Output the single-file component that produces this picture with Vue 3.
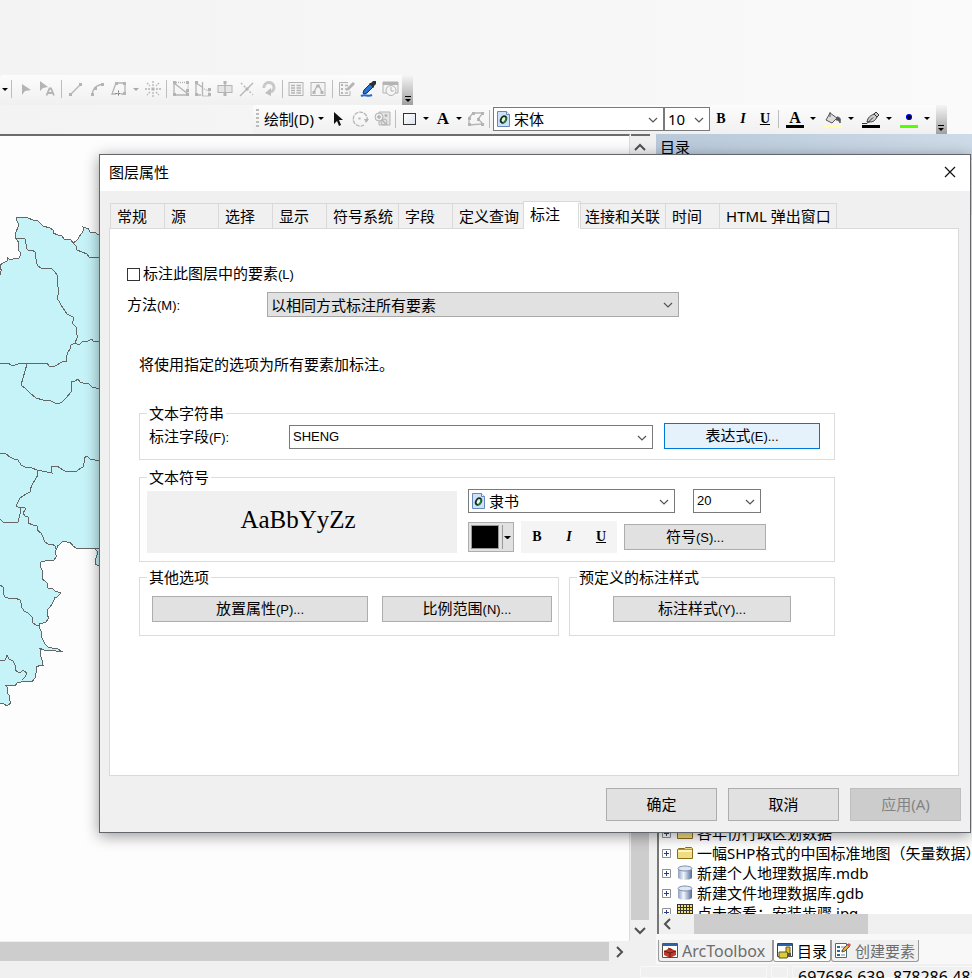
<script setup>
import { ref } from 'vue'

const G = '#b4b4b4'
const dot = (x, y, s = 3) => `<rect x="${x}" y="${y}" width="${s}" height="${s}" fill="${G}"/>`
const line = (d, extra = '') => `<path d="${d}" fill="none" stroke="${G}" stroke-width="1.3" ${extra}/>`

const editorTools = [
  { kind: 'caret', label: '编辑器' },
  { kind: 'sep' },
  { label: '编辑工具', art: `<path d="M6 5v11l3-4 6-1z" fill="${G}"/>` },
  { label: '编辑注记工具', art: `<path d="M2 2v10l3-3 5-1z" fill="${G}"/><path d="m8.500 16.500 3-7h1.500l3 7M10 14h5" fill="none" stroke="${G}" stroke-width="1.800"/>` },
  { kind: 'sep' },
  { label: '直线段', art: line('M5 15 15 5') + dot(3, 14) + dot(13, 4) },
  { label: '端点弧段', art: line('M4 16C5 9 8 6 16 5') + dot(3, 14) + dot(6, 8) + dot(13, 4) },
  { label: '追踪', art: line('M6 15H2L6 4h9v11h-4') + dot(5, 3) + dot(13, 3) + dot(13, 13) + '<path d="M8.500 11.500v6M5.500 14.500h6" stroke="#777" stroke-width="1" stroke-dasharray="2 1"/>' },
  { kind: 'caret', label: '构造工具', pale: true },
  { label: '点', gap: true, art: line('M10 2v5M10 13v5M2 10h5M13 10h5M4 4l3 3M13 13l3 3M16 4l-3 3M7 13l-3 3', 'stroke-dasharray="2 1"') + dot(8.5, 8.5) },
  { kind: 'sep' },
  { label: '编辑折点', art: line('M3 4v12h14M3 4l14 11') + line('M5 3.500h12v11', 'stroke-dasharray="1 1"') + dot(2, 2) + dot(15, 2) + dot(2, 14) + dot(15, 14) + dot(15, 10) },
  { label: '整形要素', art: line('M3 16V4l6 4M3 16h5M9.500 3v14') + line('M9 9l7 3v5H9', 'stroke-dasharray="1 1"') + dot(2, 2) + dot(2, 14) + dot(15, 9) + dot(15, 14) },
  { label: '裁剪面', art: `<rect x="3" y="6.500" width="14" height="7" fill="#e6e6e6" stroke="${G}"/>` + line('M10 3v14') + dot(8.5, 2) + dot(8.5, 14) },
  { label: '分割', art: line('M3 17 16 4') + line('M4 4l12 12', 'stroke-dasharray="2 2"') + dot(8.5, 8.5) },
  { label: '旋转', art: `<path d="M5 9a5 5 0 1 1 7 4" fill="none" stroke="#c9c9c9" stroke-width="3"/><path d="M12 9v8l-6-3z" fill="#bebebe"/>` },
  { kind: 'sep' },
  { label: '属性', art: `<rect x="2" y="3.500" width="14" height="13" fill="#f4f4f4" stroke="${G}"/>` + line('M4 6.500h4M4 9h4M4 11.500h4M4 14h4M9.500 6.500H14M9.500 9H14M9.500 11.500H14M9.500 14H14') },
  { label: '草图属性', art: `<rect x="2" y="3.500" width="14" height="13" fill="#f4f4f4" stroke="${G}"/>` + line('M5 13l3-6h2l3 6') + dot(3.5, 12) + dot(7.5, 5.5) + dot(11.5, 12) },
  { kind: 'sep' },
  { label: '创建要素', art: `<path d="M11 3.500H2.500v13H13V12" fill="#f4f4f4" stroke="${G}"/>` + line('M8 6.500h3M8 10h2M8 14h3') + dot(4, 5, 2) + dot(4, 9, 2) + dot(4, 13, 2) + `<path d="m9 12 1-3 6-6 2 2-6 6z" fill="${G}"/>` },
  { label: '草绘', art: '<path d="m4 14 1-3 6-6 3 3-6 6-3 1z" fill="#2674cf" stroke="#234"/><path d="m10 4 2 0 2-2 3 0 0 3-2 2v2z" fill="#2c3136"/><path d="M2 17c4-2 7 1 11-1" stroke="#2468d8" stroke-width="2" fill="none"/>' },
  { label: '时间滑块', art: `<path d="M2 3h15v11H2z" fill="#f3f3f3" stroke="${G}"/><path d="M2 3h15v3H2z" fill="${G}"/><circle cx="10" cy="11.500" r="5" fill="#f5f5f5" stroke="${G}"/><path d="M10 8v4h3" fill="none" stroke="${G}"/>` },
]

const drawTools = [
  { label: '选择元素', gap: true, art: '<path d="M6 3v12l3-3 2 5 2-1-2-5h4z" fill="#111"/>' },
  { label: '旋转元素', art: line('M17 12a7 7 0 1 0-3 4', 'stroke-dasharray="4 1"') + dot(8.5, 8.5, 2) + `<path d="M14 10h5l-3 4z" fill="${G}"/>` },
  { label: '缩放至元素', art: `<path d="M7 3h11v13H7z" fill="#e4e4e4" stroke="${G}"/><circle cx="7" cy="8" r="4" fill="#eee" stroke="${G}"/><path d="M7 6v4M5 8h4m1 3 5 5M14 5v3m-1.500-1.500h3" stroke="${G}" stroke-width="1.500"/><circle cx="12" cy="13" r="3" fill="none" stroke="${G}"/>` },
]
const shapeArt = '<defs><linearGradient id="shape" x2="1" y2="1"><stop stop-color="#fff"/><stop offset="1" stop-color="#dfe2ee"/></linearGradient></defs><rect x="3.500" y="4.500" width="12" height="11" fill="url(#shape)" stroke="#333"/>'
const nodeArt = line('M3 16V9l4-5h10l-5 6 5 5z') + dot(2, 14) + dot(2, 8) + dot(6, 3) + dot(15, 3) + dot(11, 9) + dot(15, 14)

const colorTools = [
  { label: '字体颜色', bar: '#000000', glyph: 'A' },
  { label: '填充颜色', bar: '#ffffb0', art: '<path d="m7 3 7 5-5 5-6-3z" fill="#ddd" stroke="#555"/><path d="M7 7V2M14 7c3 0 4 2 3 6-1-3-3-3-4-3z" fill="#555" stroke="#555"/>' },
  { label: '线颜色', bar: '#000000', art: '<path d="M6 12c1-5 3-6 7-8l3 3c-2 4-4 5-8 5zM13 4l2-2 3 3-2 2z" fill="#ccc" stroke="#333"/><path d="M1 13.500h5l6-6" fill="none" stroke="#333"/>' },
  { label: '标记颜色', bar: '#55ff00', art: '<circle cx="10" cy="7" r="2.500" fill="#000" stroke="#00f" stroke-width="1.200"/>' },
]

const tabs = ['常规', '源', '选择', '显示', '符号系统', '字段', '定义查询', '标注', '连接和关联', '时间', 'HTML 弹出窗口']
const activeTab = ref('标注')
const labelOn = ref(false)

const treeItems = [
  { icon: 'folder', text: '各年份行政区划数据' },
  { icon: 'folder', text: '一幅SHP格式的中国标准地图（矢量数据）' },
  { icon: 'db', text: '新建个人地理数据库.mdb' },
  { icon: 'db', text: '新建文件地理数据库.gdb' },
  { icon: 'raster', text: '点击查看：安装步骤.jpg' },
]

// Adds small deterministic jogs between the vertices so that borders look surveyed.
function rough(text) {
  const n = text.trim().split(/\s+/).map(Number)
  const out = [[n[0], n[1]]]
  for (let i = 2; i < n.length; i += 2) {
    const [px, py] = [n[i - 2], n[i - 1]]
    const [x, y] = [n[i], n[i + 1]]
    const len = Math.hypot(x - px, y - py)
    if (len > 5 && len < 15) {
      const k = (i * 7) % 3 - 1
      out.push([Math.round((px + x) / 2) + k, Math.round((py + y) / 2) - k])
    }
    out.push([x, y])
  }
  return out.map((p) => p.join(',')).join(' ')
}

const land = rough('-2 280 0 272 2 270 0 265 7 261 7 257 13 259 19 258 21 253 18 247 17 240 15 237 16 232 18 223 16 218 20 217 28 218 38 221 50 228 53 233 62 236 67 239 73 243 78 239 82 233 83 227 88 228 90 232 95 232 97 234 102 234 102 548 80 548 73 546 70 542 63 541 57 546 55 552 56 557 54 560 41 562 40 566 42 570 42 579 47 583 48 588 55 591 61 593 54 598 52 604 47 610 49 618 46 622 40 623 39 627 41 636 45 644 52 648 61 651 50 650 39 648 40 653 42 660 43 665 36 667 35 678 32 682 23 681 18 682 15 686 5 685 8 688 7 693 9 698 11 703 7 706 -2 703')
const borders = [
  '73 243 77 250 87 254 93 257 100 259',
  '17 238 25 239 26 248 32 250 35 255 36 262 41 268 52 269 57 275 58 287 57 298 63 308 73 317 72 323 76 327 77 335 75 343',
  '100 342 93 341 92 339 88 341 82 342 79 345 75 343 71 345 68 352 66 361 60 363 53 367 47 363 20 363 15 365 8 363 0 364',
  '27 364 21 385 30 393 43 400 57 404 62 402 71 392 71 382 78 379 83 383 92 387 100 388',
  '0 453 10 457 18 460 25 467 37 470 52 473 52 466 60 468 65 471 77 471 83 467 84 458 87 456 90 459 100 460',
  '37 471 38 475 32 485 30 492 20 498 16 506 20 508 18 522 7 522 0 519',
  '20 507 26 509 23 513 28 517 28 523 37 526 37 530 43 537 45 542 52 544 55 549',
  '0 585 3 587 3 593 8 598 20 600 21 606 28 613 33 623 39 626',
  '0 660 5 660 7 655 13 661 15 670 20 673 23 670 27 673 22 680',
  '95 549 97 555 95 560 97 565 100 566',
].map(rough)
</script>

<template>
  <div class="app">
    <header class="bars">
      <div class="bar">
        <div class="strip">
          <template v-for="(t, i) in editorTools" :key="i">
            <span v-if="t.kind === 'sep'" class="sep"></span>
            <button v-else-if="t.kind === 'caret'" class="caret" :class="{ pale: t.pale }" :aria-label="t.label"></button>
            <button v-else class="tool" :class="{ gap: t.gap }" :aria-label="t.label">
              <svg width="20" height="20" viewBox="0 0 20 20" v-html="t.art"></svg>
            </button>
          </template>
        </div>
        <button class="overflow" aria-label="工具条选项"></button>
      </div>
      <div class="bar draw">
        <div class="strip">
          <span class="grip"></span>
          <button class="menu">绘制(D)</button>
          <button class="caret" aria-label="绘制菜单"></button>
          <button v-for="t in drawTools" :key="t.label" class="tool" :class="{ gap: t.gap }" :aria-label="t.label">
            <svg width="20" height="20" viewBox="0 0 20 20" v-html="t.art"></svg>
          </button>
          <span class="sep"></span>
          <button class="tool" aria-label="矩形"><svg width="20" height="20" viewBox="0 0 20 20" v-html="shapeArt"></svg></button>
          <button class="caret" aria-label="形状"></button>
          <button class="tool glyph big gap">A</button>
          <button class="caret" aria-label="文本"></button>
          <button class="tool gap" aria-label="编辑折点"><svg width="20" height="20" viewBox="0 0 20 20" v-html="nodeArt"></svg></button>
          <span class="sep"></span>
          <span class="combo bar-font">
            <svg class="font-icon" width="14" height="16" viewBox="0 0 14 16"><path d="M.5.500h9l3 3v12H.5z" fill="#cfe0f8" stroke="#6687bf" /><path d="M9.500.500v3h3" fill="#fff" stroke="#6687bf" /><ellipse cx="6.500" cy="8.500" rx="2.500" ry="3.500" transform="rotate(28 6.500 8.500)" fill="#e8f5e8" stroke="#11331c" stroke-width="1.800" /><path d="M9 6c.5 2-.5 5-3 6" fill="none" stroke="#1f8a3a" stroke-width="1.300" /></svg>
            <select aria-label="字体"><option>宋体</option></select>
            <svg class="chev" width="10" height="6" viewBox="0 0 10 6"><path d="m1 1 4 4 4-4" /></svg>
          </span>
          <span class="combo bar-size">
            <select aria-label="字号"><option>10</option></select>
            <svg class="chev" width="10" height="6" viewBox="0 0 10 6"><path d="m1 1 4 4 4-4" /></svg>
          </span>
          <button class="tool glyph">B</button>
          <button class="tool glyph italic">I</button>
          <button class="tool glyph under">U</button>
          <span class="sep wide"></span>
          <template v-for="c in colorTools" :key="c.label">
            <button class="tool color" :aria-label="c.label">
              <span v-if="c.glyph" class="color-glyph">{{ c.glyph }}</span>
              <svg v-else width="20" height="15" viewBox="0 0 20 15" v-html="c.art"></svg>
              <span class="swatch" :style="{ background: c.bar }"></span>
            </button>
            <button class="caret roomy" :aria-label="c.label + '选项'"></button>
          </template>
        </div>
        <button class="overflow" aria-label="绘图工具条选项"></button>
      </div>
    </header>

    <main class="work">
      <section class="view">
        <div class="map">
          <svg width="100" height="580" viewBox="0 136 100 580" shape-rendering="crispEdges">
            <g fill="none" stroke="#666" stroke-width="1">
              <polygon :points="land" fill="#c6f3f8" />
              <rect x="96" y="549" width="5" height="16" fill="#c6f3f8" stroke="none" />
              <polyline v-for="(b, i) in borders" :key="i" :points="b" />
            </g>
          </svg>
        </div>
        <div class="vscroll">
          <button aria-label="向上滚动"><svg width="12" height="8" viewBox="0 0 12 8"><path d="m1 7 5-5 5 5" /></svg></button>
          <span class="thumb"></span>
          <button aria-label="向下滚动"><svg width="12" height="8" viewBox="0 0 12 8"><path d="m1 1 5 5 5-5" /></svg></button>
        </div>
        <div class="hscroll">
          <span class="thumb"></span>
          <button aria-label="向右滚动"><svg width="8" height="12" viewBox="0 0 8 12"><path d="m1 1 5 5-5 5" /></svg></button>
        </div>
      </section>

      <aside class="catalog">
        <h2>目录</h2>
        <div class="tree-tools"></div>
        <div class="tree">
          <ul>
            <li v-for="t in treeItems" :key="t.text">
              <svg class="plus" width="9" height="9" viewBox="0 0 9 9"><path d="M.5.500h8v8h-8z" fill="#fff" stroke="#919191" /><path d="M2 4.500h5M4.500 2v5" stroke="#23408c" /></svg>
              <svg v-if="t.icon === 'folder'" width="16" height="16" viewBox="0 0 16 16"><path d="M.5 13.500v-9l1-1h6l1-1h6l1 1v10z" fill="#f1dc80" stroke="#8a6d1c" /><path d="M1 6h14" stroke="#fff6c4" stroke-width="2" /><path d="M1 4.500h14" stroke="#b39432" /></svg>
              <svg v-else-if="t.icon === 'db'" width="16" height="16" viewBox="0 0 16 16"><defs><linearGradient id="drum"><stop stop-color="#8fa1bd" /><stop offset=".4" stop-color="#f3f7fd" /><stop offset="1" stop-color="#526a94" /></linearGradient></defs><path d="M1 3.500v9c0 3 14 3 14 0v-9z" fill="url(#drum)" /><ellipse cx="8" cy="3.500" rx="7" ry="2.500" fill="#dfe7f3" stroke="#7d8fae" /></svg>
              <svg v-else width="16" height="16" viewBox="0 0 16 16"><path d="M0 1h16v14H0z" fill="#333" /><path d="M1 3h15M1 6h15M1 9h15" stroke="#f3e36a" stroke-width="2" stroke-dasharray="2 1" /></svg>
              <span>{{ t.text }}</span>
            </li>
          </ul>
          <div class="tree-scroll">
            <button aria-label="向左滚动"><svg width="8" height="12" viewBox="0 0 8 12"><path d="m7 1-5 5 5 5" /></svg></button>
            <span class="thumb"></span>
          </div>
        </div>
        <nav class="docks">
          <button class="wide">
            <svg width="16" height="16" viewBox="0 0 16 16"><path d="M.5.500h15v14H.5z" fill="#fff" stroke="#555" /><path d="M1 1h14v2H1z" fill="#2d61ad" /><path d="m2 8 6-3 6 3v4l-6 3-6-3z" fill="#bd3a2d" /><path d="m2 8 6 2 6-2M8 10v5M6 5l4 2" stroke="#6d1710" fill="none" /></svg>
            ArcToolbox
          </button>
          <button class="on">
            <svg width="16" height="16" viewBox="0 0 16 16"><path d="M.5.500h15v13H.5z" fill="#fff" stroke="#345" /><path d="M1 1h14v2H1z" fill="#2d61ad" /><path d="M9 4h4v8H9z" fill="#d8bc36" stroke="#6d5b10" /><path d="M2 9h8l2 3-2 3H2z" fill="#dccb3c" stroke="#5c5414" /><path d="M10 10h4v4h-4z" fill="#555" /></svg>
            目录
          </button>
          <button>
            <svg width="16" height="16" viewBox="0 0 16 16"><path d="M.5.500h11v14H.5z" fill="#fff" stroke="#567" /><path d="M2 3h3v2H2zM2 7h3v2H2zM2 11h3v2H2z" fill="#2f6790" /><path d="M6 4h4M6 8h3M6 12h4" stroke="#789" /><path d="m7 9 1-3 5-5 2 2-5 5z" fill="#e3b04b" stroke="#654" /><path d="m12 2 2-2 2 2-2 2z" fill="#d9504f" /></svg>
            创建要素
          </button>
        </nav>
      </aside>
    </main>

    <footer class="status">
      <span class="cell a"></span><span class="cell b"></span><span class="cell c">697686.639&nbsp; 878286.482</span>
    </footer>

    <section class="dialog" role="dialog" aria-labelledby="dialog-title">
      <div class="title">
        <h1 id="dialog-title">图层属性</h1>
        <button aria-label="关闭"><svg width="12" height="12" viewBox="0 0 12 12"><path d="m1 1 10 10M11 1 1 11" stroke="#111" stroke-width="1.200" /></svg></button>
      </div>
      <div class="tabs" role="tablist">
        <button v-for="t in tabs" :key="t" role="tab" :aria-selected="t === activeTab" :class="{ on: t === activeTab }" @click="activeTab = t">{{ t }}</button>
      </div>
      <div class="panel">
        <div class="check">
          <input id="label-on" v-model="labelOn" type="checkbox" />
          <label for="label-on">标注此图层中的要素<span class="key">(L)</span></label>
        </div>
        <div class="method">
          <label for="method">方法<span class="key">(M):</span></label>
          <span class="combo filled">
            <select id="method"><option>以相同方式标注所有要素</option></select>
            <svg class="chev" width="10" height="6" viewBox="0 0 10 6"><path d="m1 1 4 4 4-4" /></svg>
          </span>
        </div>
        <p class="note">将使用指定的选项为所有要素加标注。</p>

        <div class="groups">
          <fieldset>
            <legend>文本字符串</legend>
            <div class="field-row">
              <label for="field">标注字段<span class="key">(F):</span></label>
              <span class="combo field">
                <select id="field" class="latin"><option>SHENG</option></select>
                <svg class="chev" width="10" height="6" viewBox="0 0 10 6"><path d="m1 1 4 4 4-4" /></svg>
              </span>
              <button class="btn focus">表达式<span class="key">(E)...</span></button>
            </div>
          </fieldset>

          <fieldset>
            <legend>文本符号</legend>
            <div class="symbol">
              <div class="preview">AaBbYyZz</div>
              <div class="symbol-side">
                <div class="font-row">
                  <span class="combo face">
                    <svg class="font-icon" width="14" height="16" viewBox="0 0 14 16"><path d="M.5.500h9l3 3v12H.5z" fill="#cfe0f8" stroke="#6687bf" /><path d="M9.500.500v3h3" fill="#fff" stroke="#6687bf" /><ellipse cx="6.500" cy="8.500" rx="2.500" ry="3.500" transform="rotate(28 6.500 8.500)" fill="#e8f5e8" stroke="#11331c" stroke-width="1.800" /><path d="M9 6c.5 2-.5 5-3 6" fill="none" stroke="#1f8a3a" stroke-width="1.300" /></svg>
                    <select aria-label="标注字体"><option>隶书</option></select>
                    <svg class="chev" width="10" height="6" viewBox="0 0 10 6"><path d="m1 1 4 4 4-4" /></svg>
                  </span>
                  <span class="combo size">
                    <select class="latin" aria-label="标注字号"><option>20</option></select>
                    <svg class="chev" width="10" height="6" viewBox="0 0 10 6"><path d="m1 1 4 4 4-4" /></svg>
                  </span>
                </div>
                <div class="style-row">
                  <button class="ink" aria-label="标注颜色"><span class="ink-fill"></span><span class="caret"></span></button>
                  <span class="biu">
                    <button class="glyph">B</button><button class="glyph italic">I</button><button class="glyph under">U</button>
                  </span>
                  <button class="btn symbol-btn">符号<span class="key">(S)...</span></button>
                </div>
              </div>
            </div>
          </fieldset>

          <div class="pair">
            <fieldset class="other">
              <legend>其他选项</legend>
              <div class="btn-row">
                <button class="btn place">放置属性<span class="key">(P)...</span></button>
                <button class="btn scale">比例范围<span class="key">(N)...</span></button>
              </div>
            </fieldset>
            <fieldset class="preset">
              <legend>预定义的标注样式</legend>
              <div class="btn-row center">
                <button class="btn styles">标注样式<span class="key">(Y)...</span></button>
              </div>
            </fieldset>
          </div>
        </div>
      </div>
      <div class="actions">
        <button class="btn">确定</button>
        <button class="btn">取消</button>
        <button class="btn" disabled>应用(A)</button>
      </div>
    </section>
  </div>
</template>

<style>
html,
body {
  margin: 0;
  background: #f0f0f0;
}
</style>

<style scoped>
.app {
  position: relative;
  display: flex;
  flex-direction: column;
  min-height: 100vh;
  overflow: hidden;
  background: #f0f0f0;
  color: #000;
  font: 15px/20px "Noto Sans", "Noto Sans CJK SC", sans-serif;
}
.app *,
.app *::before {
  box-sizing: border-box;
}
button,
select {
  margin: 0;
  padding: 0;
  border: 0;
  background: none;
  color: inherit;
  font: inherit;
}
svg {
  display: block;
  flex: none;
}
h1,
h2,
p,
ul {
  margin: 0;
  padding: 0;
  font-size: 15px;
  font-weight: 400;
  list-style: none;
}

/* toolbars */
.bars {
  padding-top: 75px;
  background: linear-gradient(90deg, #f3f3f3, #fafafa);
}
.bar {
  display: flex;
  height: 30px;
}
.bar.draw {
  height: 29px;
  padding-left: 253px;
}
.strip {
  display: flex;
  align-items: center;
  padding-bottom: 2px;
  border-radius: 3px 0 0 3px;
  background: linear-gradient(#fcfcfc, #f0f0f0);
}
.tool {
  display: flex;
  align-items: center;
  justify-content: center;
  flex: none;
  width: 22px;
  height: 24px;
}
.tool.gap {
  margin-left: 2px;
}
.sep {
  flex: none;
  width: 1px;
  height: 18px;
  margin: 0 3px 0 2px;
  background: #bdbdbd;
}
.sep.wide {
  margin: 0 5px 0 2px;
}
.caret {
  display: block;
  flex: none;
  width: 9px;
  height: 20px;
  padding: 0 1px 0 2px;
}
.caret::before {
  content: "";
  display: block;
  border: 3px solid transparent;
  border-top-color: #000;
  border-bottom: 0;
}
.caret.pale::before {
  border-top-color: #aaa;
}
.caret.roomy {
  width: 16px;
  padding: 0 6px 0 4px;
}
.overflow {
  display: flex;
  flex-direction: column;
  align-items: center;
  justify-content: flex-end;
  width: 11px;
  padding-bottom: 3px;
  background: linear-gradient(#f5f5f5, #a0a0a0);
}
.overflow::before {
  content: "";
  width: 6px;
  height: 2px;
  border-top: 1px solid #000;
}
.overflow::after {
  content: "";
  margin-top: 1px;
  border: 3px solid transparent;
  border-top-color: #000;
  border-bottom: 0;
}
.grip {
  width: 3px;
  height: 20px;
  margin: 0 5px 0 3px;
  background: repeating-linear-gradient(#bbb 0 2px, transparent 2px 4px);
}
.menu {
  margin-right: 2px;
  white-space: nowrap;
}
.glyph {
  font: bold 14px/20px "Liberation Serif", serif;
}
.glyph.big {
  font-size: 17px;
}
.glyph.italic {
  font-style: italic;
}
.glyph.under {
  text-decoration: underline;
}
.tool.color {
  flex-direction: column;
  justify-content: flex-end;
  padding-bottom: 3px;
}
.color-glyph {
  height: 15px;
  font: bold 16px/15px "Liberation Serif", serif;
}
.swatch {
  width: 18px;
  height: 3px;
}

/* combo boxes */
.combo {
  position: relative;
  display: flex;
  align-items: center;
  height: 24px;
  border: 1px solid #7a7a7a;
  background: #fff;
}
.combo select {
  flex: 1;
  min-width: 0;
  height: 100%;
  padding-left: 3px;
  appearance: none;
  outline: 0;
  line-height: 20px;
}
.combo select.latin {
  font: 13px/20px "Liberation Sans", sans-serif;
}
.combo .font-icon {
  margin-left: 3px;
}
.chev {
  position: absolute;
  right: 5px;
  top: 9px;
  fill: none;
  stroke: #555;
  stroke-width: 1.2;
  pointer-events: none;
}
.bar-font {
  width: 171px;
}
.bar-size {
  width: 46px;
}
.filled {
  width: 412px;
  height: 25px;
  border-color: #a8a8a8;
  background: #e1e1e1;
}

/* work area */
.work {
  display: flex;
  flex: 1;
}
.view {
  display: grid;
  flex: 1;
  grid-template-columns: 1fr 20px;
  grid-template-rows: 1fr 19px;
  row-gap: 1px;
  padding: 0 6px 3px 0;
}
.map {
  overflow: hidden;
  border: solid #6c6c6c;
  border-width: 2px 0 0;
  border-right: 1px solid #ddd;
  background: #fdfdfd;
}
.vscroll,
.hscroll,
.tree-scroll {
  display: flex;
  background: #f0f0f0;
}
.vscroll {
  flex-direction: column;
  margin-left: 1px;
  padding-right: 1px;
  border-top: 2px solid #6c6c6c;
}
.thumb {
  background: #cdcdcd;
}
.vscroll .thumb {
  flex: 1;
  margin-top: 100px;
}
.hscroll .thumb {
  flex: 1;
}
.vscroll path,
.hscroll path,
.tree-scroll path {
  fill: none;
  stroke: #505050;
  stroke-width: 2;
}
.vscroll button,
.hscroll button,
.tree-scroll button {
  display: flex;
  align-items: center;
  justify-content: center;
  flex: none;
  width: 18px;
  height: 21px;
}
.hscroll button {
  width: 21px;
  height: 19px;
}
.tree-scroll button {
  width: 16px;
  height: 20px;
}
.catalog {
  display: flex;
  flex-direction: column;
  width: 316px;
  min-width: 0;
}
.catalog h2 {
  height: 26px;
  padding: 3px 4px;
  background: linear-gradient(90deg, #b9c9da, #cddae7);
}
.tree-tools {
  height: 55px;
}
.tree {
  display: flex;
  flex: 1;
  flex-direction: column;
  justify-content: flex-end;
  margin-left: 1px;
  border-left: 2px solid #777;
  background: #fff;
}
.tree ul {
  overflow: hidden;
}
.tree li {
  display: flex;
  align-items: center;
  gap: 4px;
  height: 20px;
  padding-left: 3px;
  white-space: nowrap;
}
.tree li:last-child {
  height: 11px;
  align-items: flex-start;
}
.tree .plus {
  margin-right: 2px;
}
.tree li:last-child .plus {
  margin-top: 5px;
}
.tree-scroll {
  height: 20px;
}
.tree-scroll .thumb {
  width: 174px;
  margin-left: 19px;
}
.docks {
  display: flex;
  height: 30px;
  padding: 6px 2px 2px;
  background: #f8f8f8;
  color: #6d6d6d;
}
.docks button {
  display: flex;
  align-items: center;
  gap: 4px;
  padding: 0 3px;
  border: solid #999;
  border-width: 0 1px 1px;
  border-radius: 0 0 3px 3px;
  background: #f0f0f0;
  white-space: nowrap;
}
.docks button.wide {
  width: 115px;
  font-size: 16px;
}
.docks button.on {
  background: #fff;
  color: #000;
}
.status {
  display: flex;
  height: 14px;
  gap: 4px;
  padding: 2px 0 0 640px;
  overflow: hidden;
  font-size: 16px;
}
.cell {
  flex: none;
  border: 1px solid #f8f8f8;
}
.cell.a {
  width: 127px;
}
.cell.b {
  width: 17px;
}
.cell.c {
  flex: 1 0 auto;
  padding-left: 5px;
  line-height: 20px;
  white-space: nowrap;
}

/* dialog window */
.dialog {
  position: absolute;
  top: 154px;
  left: 99px;
  right: 1px;
  border: 1px solid #62666b;
  background: #f0f0f0;
  box-shadow: 0 3px 14px rgba(0, 0, 0, 0.4);
}
.title {
  display: flex;
  align-items: center;
  justify-content: space-between;
  height: 36px;
  padding: 0 14px 2px 9px;
  background: #fff;
}
.tabs {
  display: flex;
  align-items: flex-end;
  padding: 10px 10px 0;
}
.tabs button {
  min-width: 54px;
  height: 25px;
  padding: 0 5px 0 6px;
  border: solid #d9d9d9;
  border-width: 1px 0 0 1px;
  text-align: left;
  white-space: nowrap;
}
.tabs button:last-child {
  border-right-width: 1px;
}
.tabs button.on {
  min-width: 58px;
  height: 28px;
  margin: 0 -3px -1px -1px;
  padding: 0 6px 4px;
  border-right-width: 1px;
  background: #fff;
}
.panel {
  min-height: 548px;
  margin: 0 11px 0 9px;
  padding: 35px 17px 20px;
  border: 1px solid #d9d9d9;
  background: #fff;
}
.key {
  font: 13px/20px "Liberation Sans", sans-serif;
}
.check {
  display: flex;
  align-items: center;
  gap: 3px;
  height: 20px;
}
.check input {
  width: 13px;
  height: 13px;
  margin: 0;
  border: 1px solid #333;
  background: #fff;
  appearance: none;
}
.check input:checked {
  background: #333;
}
.method {
  display: flex;
  align-items: center;
  margin-top: 8px;
}
.method label {
  width: 140px;
}
.note {
  margin: 37px 0 29px 12px;
}
.groups {
  display: flex;
  flex-direction: column;
  gap: 7px;
  max-width: 708px;
  padding-left: 12px;
}
fieldset {
  min-width: 0;
  margin: 0;
  padding: 0 7px 8px;
  border: 1px solid #dcdcdc;
}
legend {
  height: 20px;
  padding: 0 2px;
}
.field-row {
  display: flex;
  align-items: center;
  height: 28px;
  padding: 0 7px 0 2px;
}
.field-row label {
  width: 140px;
}
.field {
  flex: 1;
  margin-right: 11px;
}
.btn {
  height: 26px;
  border: 1px solid #adadad;
  background: #e1e1e1;
  white-space: nowrap;
}
.btn.focus {
  align-self: flex-start;
  width: 156px;
  border-color: #0078d7;
  background: #e5f1fb;
}
.symbol {
  display: flex;
  gap: 11px;
  padding-top: 2px;
}
.preview {
  display: flex;
  align-items: center;
  justify-content: center;
  flex: 1;
  max-width: 310px;
  height: 62px;
  margin-top: 2px;
  padding: 0 8px 4px 0;
  background: #f0f0f0;
  font: 25px/30px "Liberation Serif", serif;
}
.font-row {
  display: flex;
  gap: 18px;
}
.face {
  width: 207px;
}
.size {
  width: 68px;
}
.style-row {
  display: flex;
  align-items: center;
  gap: 7px;
  height: 32px;
  margin-top: 8px;
}
.ink {
  display: flex;
  align-items: center;
  width: 46px;
  height: 30px;
  padding: 2px;
  border: 1px solid #adadad;
  background: #e1e1e1;
}
.ink-fill {
  width: 30px;
  height: 24px;
  margin-right: 3px;
  border: 1px solid #999;
  background: #000;
}
.ink .caret {
  height: 24px;
  padding: 11px 0 0 1px;
  border-left: 1px solid #999;
}
.biu {
  display: flex;
  width: 96px;
  height: 32px;
  background: #f4f4f4;
}
.biu button {
  flex: 1;
}
.symbol-btn {
  width: 142px;
}
.pair {
  display: flex;
  gap: 10px;
  margin-top: -2px;
}
.other {
  flex: 1 1 420px;
  padding-right: 6px;
}
.preset {
  flex: 1 1 266px;
}
.btn-row {
  display: flex;
  gap: 14px;
  padding: 9px 0 5px 5px;
}
.btn-row.center {
  justify-content: center;
  padding-left: 0;
}
.place {
  flex: 1 1 216px;
}
.scale {
  flex: 1 1 170px;
}
.styles {
  width: 178px;
}
.actions {
  display: flex;
  justify-content: flex-end;
  gap: 11px;
  padding: 12px 9px 11px;
}
.actions .btn {
  width: 111px;
  height: 33px;
  padding-bottom: 2px;
}
.actions .btn:disabled {
  border-color: #bfbfbf;
  background: #ccc;
  color: #838383;
}
</style>
